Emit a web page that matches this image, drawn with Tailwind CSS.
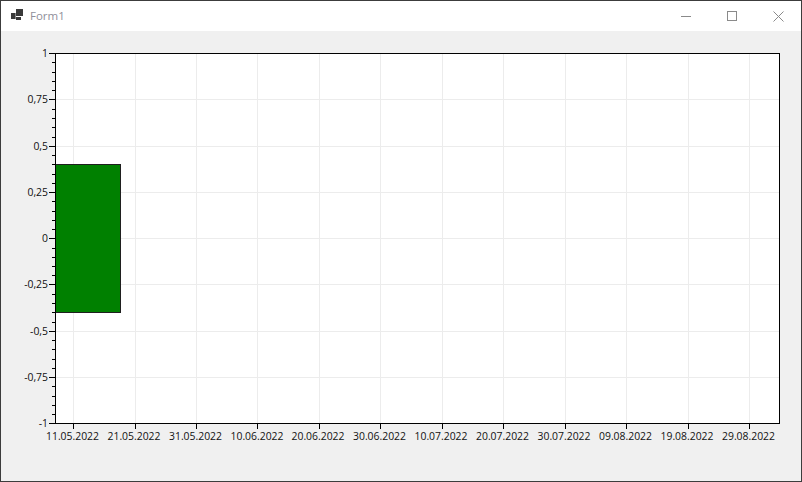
<!DOCTYPE html>
<html lang="en">
<head>
  <meta charset="UTF-8" />
  <title>Form1</title>
  <script src="https://cdn.jsdelivr.net/npm/@tailwindcss/browser@4"></script>
</head>
<body class="w-[802px] h-[482px] overflow-hidden bg-[#f0f0f0]">
  <div class="w-[802px] h-[482px] flex flex-col border border-[#3c3c3c] font-['Open_Sans',sans-serif]">
    <!-- title bar -->
    <div class="h-[30px] shrink-0 bg-white flex items-center">
      <svg class="ml-[10px] mt-[-1px] block" width="12" height="13" viewBox="0 0 12 13">
        <rect x="0" y="4" width="4.6" height="6" fill="#3a3a3a" />
        <rect x="5" y="0" width="7" height="7" fill="#3a3a3a" />
        <rect x="5" y="8" width="5" height="3" fill="#3a3a3a" />
      </svg>
      <span class="ml-[7px] text-[11.5px] leading-[16px] text-[#8f8f9a] font-['Open_Sans',sans-serif]">Form1</span>
      <div class="ml-auto flex h-full">
        <div class="w-[46px] flex items-center justify-center">
          <svg width="10" height="10" viewBox="0 0 10 10"><path d="M0 5.5H10" stroke="#8a8a8a" /></svg>
        </div>
        <div class="w-[46px] flex items-center justify-center">
          <svg width="10" height="10" viewBox="0 0 10 10"><rect x=".5" y=".5" width="9" height="9" fill="none" stroke="#8a8a8a" /></svg>
        </div>
        <div class="w-[46px] flex items-center justify-center">
          <svg width="11" height="11" viewBox="0 0 11 11"><path d="M.5 .5L10.5 10.5M10.5 .5L.5 10.5" stroke="#8a8a8a" /></svg>
        </div>
      </div>
    </div>

    <!-- chart, viewBox uses window coordinates -->
    <svg class="block flex-1 text-[10.4px] font-['Open_Sans',sans-serif]" width="800" height="450" viewBox="1 31 800 450" shape-rendering="crispEdges">
      <rect x="55" y="53" width="724" height="370" fill="#fff" />

      <g stroke="#ececec">
        <path d="M73.5 53V423M135.5 53V423M196.5 53V423M257.5 53V423M319.5 53V423M380.5 53V423M442.5 53V423M503.5 53V423M565.5 53V423M626.5 53V423M688.5 53V423M749.5 53V423" />
        <path d="M55 99.5H779M55 146.5H779M55 192.5H779M55 238.5H779M55 284.5H779M55 331.5H779M55 377.5H779" />
      </g>

      <rect x="55.5" y="164.5" width="65" height="148" fill="#008000" stroke="#1f1f1f" />

      <rect x="55.5" y="53.5" width="724" height="370" fill="none" stroke="#000" />

      <g stroke="#000">
        <path d="M49 53.5H55M49 99.5H55M49 146.5H55M49 192.5H55M49 238.5H55M49 284.5H55M49 331.5H55M49 377.5H55M49 423.5H55" />
        <path d="M52 62.5H55M52 72.5H55M52 81.5H55M52 90.5H55M52 109.5H55M52 118.5H55M52 127.5H55M52 137.5H55M52 155.5H55M52 164.5H55M52 174.5H55M52 183.5H55M52 201.5H55M52 211.5H55M52 220.5H55M52 229.5H55M52 248.5H55M52 257.5H55M52 266.5H55M52 275.5H55M52 294.5H55M52 303.5H55M52 312.5H55M52 322.5H55M52 340.5H55M52 349.5H55M52 359.5H55M52 368.5H55M52 386.5H55M52 396.5H55M52 405.5H55M52 414.5H55" />
        <path d="M73.5 424V429M135.5 424V429M196.5 424V429M257.5 424V429M319.5 424V429M380.5 424V429M442.5 424V429M503.5 424V429M565.5 424V429M626.5 424V429M688.5 424V429M749.5 424V429" />
      </g>

      <g fill="#111" text-anchor="end">
        <text x="48" y="57">1</text>
        <text x="48" y="103">0,75</text>
        <text x="48" y="150">0,5</text>
        <text x="48" y="196">0,25</text>
        <text x="48" y="242">0</text>
        <text x="48" y="288">-0,25</text>
        <text x="48" y="335">-0,5</text>
        <text x="48" y="381">-0,75</text>
        <text x="48" y="427">-1</text>
      </g>

      <g fill="#111" text-anchor="middle">
        <text x="72.5" y="440">11.05.2022</text>
        <text x="134" y="440">21.05.2022</text>
        <text x="195.5" y="440">31.05.2022</text>
        <text x="257" y="440">10.06.2022</text>
        <text x="318" y="440">20.06.2022</text>
        <text x="379.5" y="440">30.06.2022</text>
        <text x="441" y="440">10.07.2022</text>
        <text x="502.5" y="440">20.07.2022</text>
        <text x="564" y="440">30.07.2022</text>
        <text x="625.5" y="440">09.08.2022</text>
        <text x="687" y="440">19.08.2022</text>
        <text x="748.5" y="440">29.08.2022</text>
      </g>
    </svg>
  </div>
</body>
</html>
